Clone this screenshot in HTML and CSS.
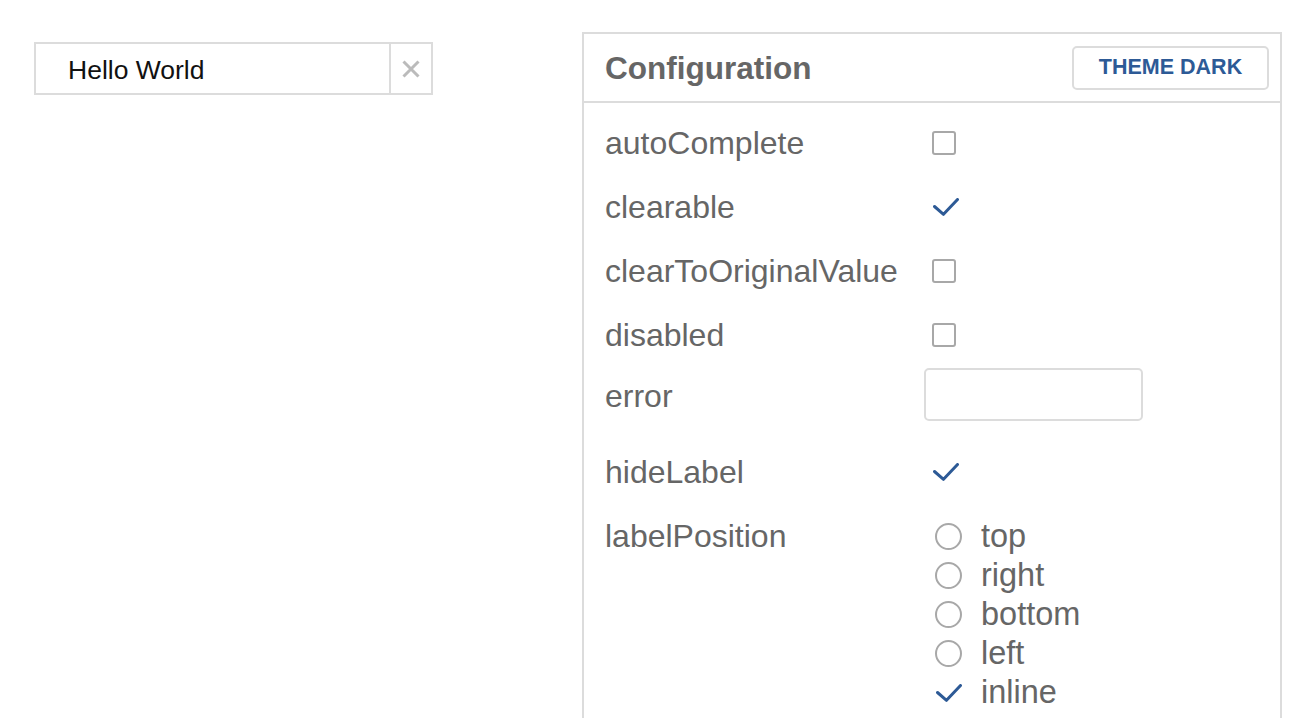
FILE: index.html
```html
<!DOCTYPE html>
<html lang="en">
<head>
<meta charset="utf-8">
<title>Input Configuration</title>
<link rel="stylesheet" href="styles.css">
</head>
<body>
<div class="page">
  <div class="demo">
    <div class="field">
      <div class="field-value">Hello World</div>
      <div class="field-clear">
        <svg width="18" height="18" viewBox="0 0 18 18"><path d="M1.5 1.5 L16.5 16.5 M16.5 1.5 L1.5 16.5" stroke="#bbbbbb" stroke-width="3" fill="none"/></svg>
      </div>
    </div>
  </div>

  <div class="panel">
    <div class="panel-header">
      <div class="panel-title">Configuration</div>
      <div class="btn">THEME DARK</div>
    </div>
    <div class="panel-body">
      <div class="row">
        <div class="label">autoComplete</div>
        <div class="control"><span class="checkbox"></span></div>
      </div>
      <div class="row">
        <div class="label">clearable</div>
        <div class="control">
          <svg class="check" width="26" height="18" viewBox="0 0 26 18"><path d="M1.5 8.5 L10.5 16.3 L24.5 1.5" stroke="#2d5a96" stroke-width="3" fill="none" stroke-linecap="round" stroke-linejoin="round"/></svg>
        </div>
      </div>
      <div class="row">
        <div class="label">clearToOriginalValue</div>
        <div class="control"><span class="checkbox"></span></div>
      </div>
      <div class="row">
        <div class="label">disabled</div>
        <div class="control"><span class="checkbox"></span></div>
      </div>
      <div class="row row-error">
        <div class="label label-error">error</div>
        <div class="control"><div class="text-input"></div></div>
      </div>
      <div class="row">
        <div class="label">hideLabel</div>
        <div class="control">
          <svg class="check" width="26" height="18" viewBox="0 0 26 18"><path d="M1.5 8.5 L10.5 16.3 L24.5 1.5" stroke="#2d5a96" stroke-width="3" fill="none" stroke-linecap="round" stroke-linejoin="round"/></svg>
        </div>
      </div>
      <div class="row row-radio">
        <div class="label label-radio">labelPosition</div>
        <div class="control">
          <div class="radio-list">
            <div class="radio-item"><span class="radio-icon"><span class="radio"></span></span><span class="radio-label">top</span></div>
            <div class="radio-item"><span class="radio-icon"><span class="radio"></span></span><span class="radio-label">right</span></div>
            <div class="radio-item"><span class="radio-icon"><span class="radio"></span></span><span class="radio-label">bottom</span></div>
            <div class="radio-item"><span class="radio-icon"><span class="radio"></span></span><span class="radio-label">left</span></div>
            <div class="radio-item"><span class="radio-icon">
              <svg width="26" height="18" viewBox="0 0 26 18"><path d="M1.5 8.5 L10.5 16.3 L24.5 1.5" stroke="#2d5a96" stroke-width="3" fill="none" stroke-linecap="round" stroke-linejoin="round"/></svg>
            </span><span class="radio-label">inline</span></div>
          </div>
        </div>
      </div>
    </div>
  </div>
</div>
</body>
</html>
```

FILE: styles.css
```css
html, body {
  margin: 0;
  padding: 0;
  background: #fff;
  font-family: "Liberation Sans", Arial, sans-serif;
  overflow: hidden;
}

.page {
  display: flex;
  align-items: flex-start;
  padding: 32px 0 0 34px;
  gap: 149px;
}

.demo {
  padding-top: 10px;
}

.field {
  display: flex;
  width: 399px;
  height: 53px;
  box-sizing: border-box;
  border: 2px solid #dcdcdc;
}

.field-value {
  flex: 1;
  display: flex;
  align-items: center;
  padding-left: 32px;
  padding-top: 3px;
  font-size: 26.5px;
  color: #111;
}

.field-clear {
  width: 42px;
  border-left: 2px solid #dcdcdc;
  display: flex;
  align-items: center;
  justify-content: center;
  box-sizing: border-box;
  padding-right: 1px;
}

.panel {
  width: 700px;
  height: 720px;
  box-sizing: border-box;
  border: 2px solid #dcdcdc;
  border-bottom: none;
}

.panel-header {
  display: flex;
  align-items: center;
  justify-content: space-between;
  height: 67px;
  padding: 0 11px 0 21px;
  border-bottom: 2px solid #dcdcdc;
}

.panel-title {
  font-size: 31.5px;
  font-weight: bold;
  color: #666;
  padding-top: 2px;
}

.btn {
  width: 197px;
  height: 44px;
  box-sizing: border-box;
  border: 2px solid #dcdcdc;
  border-radius: 5px;
  display: flex;
  align-items: center;
  justify-content: center;
  font-size: 21.5px;
  font-weight: bold;
  color: #2d5a96;
}

.panel-body {
  padding: 8px 0 0 21px;
}

.row {
  display: flex;
  align-items: center;
  height: 64px;
}

.label {
  width: 319px;
  font-size: 32px;
  color: #666;
}

.control {
  display: flex;
  align-items: center;
}

.checkbox {
  display: block;
  width: 24px;
  height: 24px;
  box-sizing: border-box;
  border: 2px solid #a8a8a8;
  border-radius: 3px;
  margin-left: 8px;
}

.check {
  display: block;
  margin-left: 9px;
}

.row-error {
  height: 73px;
  align-items: flex-start;
}

.label-error {
  line-height: 53px;
  padding-top: 3px;
}

.text-input {
  width: 219px;
  height: 53px;
  box-sizing: border-box;
  border: 2px solid #dcdcdc;
  border-radius: 5px;
  margin-top: 1px;
}

.row-radio {
  height: auto;
  align-items: flex-start;
  padding-top: 13px;
}

.label-radio {
  line-height: 39px;
}

.radio-list {
  display: flex;
  flex-direction: column;
}

.radio-item {
  display: flex;
  align-items: center;
  height: 39px;
}

.radio-icon {
  width: 28px;
  margin-left: 10px;
  display: flex;
  align-items: center;
  justify-content: center;
}

.radio-icon svg {
  display: block;
  margin-left: 2px;
}

.radio {
  display: block;
  width: 27px;
  height: 27px;
  box-sizing: border-box;
  border: 2px solid #a8a8a8;
  border-radius: 50%;
}

.radio-label {
  margin-left: 19px;
  font-size: 32.5px;
  color: #666;
  line-height: 39px;
}
```
